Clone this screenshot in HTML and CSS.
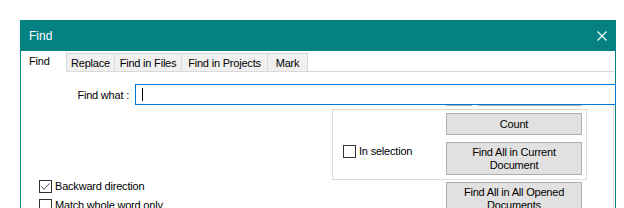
FILE: index.html
```html
<!DOCTYPE html>
<html>
<head>
<meta charset="utf-8">
<title>Find</title>
<link rel="stylesheet" href="styles.css">
</head>
<body>
<div class="window">
  <div class="titlebar">
    <span class="title">Find</span>
    <svg class="close" width="10" height="10" viewBox="0 0 10 10"><path d="M0.5 0.5L9.5 9.5M9.5 0.5L0.5 9.5" stroke="#ffffff" stroke-width="1.1" fill="none"/></svg>
  </div>
  <div class="tabs">
    <div class="tab active">Find</div>
    <div class="tab t-replace">Replace</div>
    <div class="tab t-files">Find in Files</div>
    <div class="tab t-projects">Find in Projects</div>
    <div class="tab t-mark">Mark</div>
    <div class="tab-fill"></div>
  </div>
  <div class="panel">
    <div class="find-row">
      <span class="find-label">Find what :</span>
      <div class="find-input"><span class="caret"></span></div>
    </div>
    <div class="hidden-row"><span class="stub stub-a"></span><span class="stub stub-b"></span></div>
    <div class="group">
      <div class="check sel"><span class="box"></span><span>In selection</span></div>
      <div class="btn-col">
        <div class="btn btn-count"><span>Count</span></div>
        <div class="btn btn-two"><span>Find All in Current<br>Document</span></div>
      </div>
    </div>
    <div class="bottom">
      <div class="options">
        <div class="check"><span class="box"><svg width="11" height="11" viewBox="0 0 11 11"><path d="M1.5 5.5L4 8.2L9.5 2.5" stroke="#4a4a4a" stroke-width="1" fill="none"/></svg></span><span>Backward direction</span></div>
        <div class="check"><span class="box"></span><span>Match whole word only</span></div>
      </div>
      <div class="btn btn-two btn-all"><span>Find All in All Opened<br>Documents</span></div>
    </div>
  </div>
</div>
</body>
</html>
```

FILE: styles.css
```css
html, body {
  margin: 0;
  padding: 0;
  background: #ffffff;
}

body {
  width: 624px;
  height: 208px;
  overflow: hidden;
  font-family: "Liberation Sans", Arial, sans-serif;
  font-size: 11px;
  letter-spacing: -0.2px;
  color: #000000;
}

.window {
  margin: 20px 0 0 20px;
  width: 596px;
  height: 260px;
  box-sizing: border-box;
  border-left: 1px solid #058183;
  border-right: 1px solid #058183;
  background: #ffffff;
}

.titlebar {
  height: 31px;
  background: #058183;
  display: flex;
  align-items: center;
  justify-content: space-between;
  padding: 0 8px 0 8px;
  color: #ffffff;
  font-size: 12px;
  letter-spacing: 0;
}

.title {
  line-height: 32px;
}

.close {
  display: block;
}

.tabs {
  display: flex;
  align-items: flex-end;
  height: 21px;
  width: 593px;
}

.tab {
  box-sizing: border-box;
  flex: none;
  height: 19px;
  border-top: 1px solid #d9d9d9;
  border-right: 1px solid #d9d9d9;
  border-bottom: 1px solid #d9d9d9;
  background: #f0f0f0;
  text-align: center;
  line-height: 18px;
  white-space: nowrap;
}

.tab.active {
  width: 46px;
  height: 21px;
  border-top: 0;
  border-bottom: 0;
  background: #ffffff;
  text-align: left;
  padding-left: 8px;
  line-height: 21px;
}

.t-replace { width: 48px; }
.t-files { width: 67px; }
.t-projects { width: 86px; }
.t-mark { width: 40px; }

.tab-fill {
  flex: 1;
  height: 1px;
  background: #d9d9d9;
}

.panel {
  width: 593px;
  height: 200px;
  box-sizing: border-box;
  border-right: 1px solid #d9d9d9;
}

.find-row {
  display: flex;
  align-items: center;
  margin-top: 12px;
  height: 21px;
}

.find-label {
  flex: none;
  width: 114px;
  box-sizing: border-box;
  text-align: right;
  padding-right: 6px;
}

.find-input {
  flex: none;
  width: 481px;
  height: 21px;
  box-sizing: border-box;
  border: 1px solid #0078d7;
  background: #ffffff;
}

.caret {
  display: block;
  margin: 3px 0 0 6px;
  width: 1px;
  height: 13px;
  background: #000000;
}

.hidden-row {
  display: flex;
  gap: 6px;
  margin-left: 425px;
  height: 1px;
}

.stub {
  display: block;
  height: 1px;
  background: #b4b4b4;
}

.stub-a { width: 26px; }
.stub-b { width: 104px; }

.group {
  display: flex;
  margin: 3px 0 0 311px;
  width: 255px;
  height: 71px;
  box-sizing: border-box;
  border: 1px solid #dcdcdc;
}

.check {
  display: flex;
  align-items: center;
  height: 13px;
  line-height: 13px;
  white-space: nowrap;
}

.box {
  flex: none;
  display: block;
  width: 13px;
  height: 13px;
  box-sizing: border-box;
  border: 1px solid #333333;
  background: #ffffff;
  margin-right: 3px;
}

.box svg {
  display: block;
}

.check.sel {
  margin: 35px 0 0 10px;
}

.btn-col {
  margin-left: auto;
  margin-right: 4px;
  padding-top: 3px;
}

.btn {
  width: 136px;
  box-sizing: border-box;
  border: 1px solid #adadad;
  background: #e1e1e1;
  display: flex;
  align-items: center;
  justify-content: center;
  text-align: center;
}

.btn-count {
  height: 22px;
  line-height: 13px;
}

.btn-two {
  height: 33px;
  margin-top: 7px;
  line-height: 13px;
}

.bottom {
  display: grid;
  grid-template-columns: 425px 136px;
  align-items: start;
}

.options {
  padding-left: 18px;
  display: flex;
  flex-direction: column;
  gap: 6px;
}

.btn-all {
  margin-top: 2px;
}
```
